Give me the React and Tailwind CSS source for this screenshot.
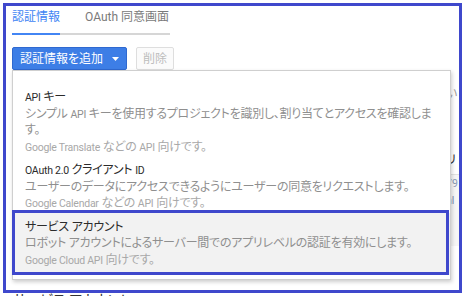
import React from 'react';

// Latin runs sit smaller than the kanji, like Meiryo UI does
const L = ({ children }) => <span className="text-[10.5px] leading-[10px]">{children}</span>;

const items = [
  {
    id: 1,
    title: (<><L>API</L> キー</>),
    desc: [
      (<>シンプル <L>API</L> キーを使用するプロジェクトを識別し、割り当てとアクセスを確認しま</>),
      (<>す。</>),
    ],
    note: (<><L>Google Translate</L> などの <L>API</L> 向けです。</>),
  },
  {
    id: 2,
    title: (<><L>OAuth 2.0</L> クライアント <L>ID</L></>),
    desc: [(<>ユーザーのデータにアクセスできるようにユーザーの同意をリクエストします。</>)],
    note: (<><L>Google Calendar</L> などの <L>API</L> 向けです。</>),
  },
  {
    id: 3,
    title: (<>サービス アカウント</>),
    desc: [(<>ロボット アカウントによるサーバー間でのアプリレベルの認証を有効にします。</>)],
    note: (<><L>Google Cloud API</L> 向けです。</>),
    active: true,
  },
];

function Menu() {
  return (
    <div className="absolute left-0 top-full z-10 w-[439px] border border-[#cfcfcf] bg-white pt-[12px] pb-[4px] shadow-[1px_2px_4px_rgba(0,0,0,0.2)]">
      {items.map((item) => (
        <div
          key={item.id}
          className={`px-[12px] pt-[6px] whitespace-nowrap leading-[16.5px] tracking-[-0.25px] ${item.active ? 'bg-[#f2f2f2] pb-[7px]' : 'pb-[1px]'}`}
        >
          <div className="text-[#2b2b2b]">{item.title}</div>
          {item.desc.map((line, i) => (
            <div key={i} className="text-[#8f8f8f]">{line}</div>
          ))}
          <div className="text-[#a8a8a8]">{item.note}</div>
        </div>
      ))}
      {/* annotation frame around the hovered item */}
      <div className="pointer-events-none absolute left-[-1px] top-[139px] h-[65px] w-[437px] border-[3px] border-[#3f48cc]" />
    </div>
  );
}

export default function App() {
  return (
    <div className="h-[296px] w-[466px] overflow-hidden bg-white pl-[3px] pt-[3px] font-['Roboto','Noto_Sans_CJK_JP',sans-serif] text-[12px] [font-feature-settings:'palt']">
      <div className="relative h-[290px] w-[459px] overflow-hidden border-[3px] border-[#3f48cc] bg-white">
        <div className="pl-[6px] pt-[3px]">
          {/* Tabs */}
          <div className="flex w-[158px] gap-[25px] border-b-2 border-[#d6d6d6]">
            <div className="-mb-[2px] border-b-2 border-[#4285f4] pb-[8px] leading-[16px] text-[#4285f4]">認証情報</div>
            <div className="pb-[8px] leading-[16px] text-[#7a7a7a]">OAuth 同意画面</div>
          </div>

          {/* Buttons + dropdown */}
          <div className="relative mt-[12px] flex gap-[9px]">
            <button className="flex h-[23px] w-[115px] items-center rounded-[2px] border border-[#2f69d0] bg-[#3d7ee6] pl-[7px] pr-[7px] leading-none text-white">
              <span>認証情報を追加</span>
              <svg className="ml-auto" width="7" height="4" viewBox="0 0 7 4"><path d="M0 0h7L3.5 4z" fill="#fff" /></svg>
            </button>
            <button className="h-[23px] w-[38px] rounded-[2px] border border-[#dedede] bg-[#fbfbfb] leading-none text-[#bdbdbd]">削除</button>
            <Menu />
          </div>

          {/* page content peeking out right of the menu */}
          <div className="ml-[434px] w-[12px] whitespace-nowrap">
            <div className="mt-[16px] leading-[16px] text-[#9a9a9a]">い</div>
            <div className="mt-[50px] leading-[16px] text-[#333]">リ</div>
            <div className="mt-[6px] h-[72px] w-[13px] border-t border-[#e2e2e2] bg-[#f6f6f6] pt-[1px]">
              <div className="leading-[14px] text-[#8a9bb5]"><L>79</L></div>
              <div className="mt-[3px] leading-[14px] text-[#7f93b3]"><L>nl</L></div>
            </div>
          </div>
        </div>
      </div>
      <div className="-mt-[1px] pl-[10px] text-[14px] leading-[16px] text-[#333]">サービス アカウント</div>
    </div>
  );
}
